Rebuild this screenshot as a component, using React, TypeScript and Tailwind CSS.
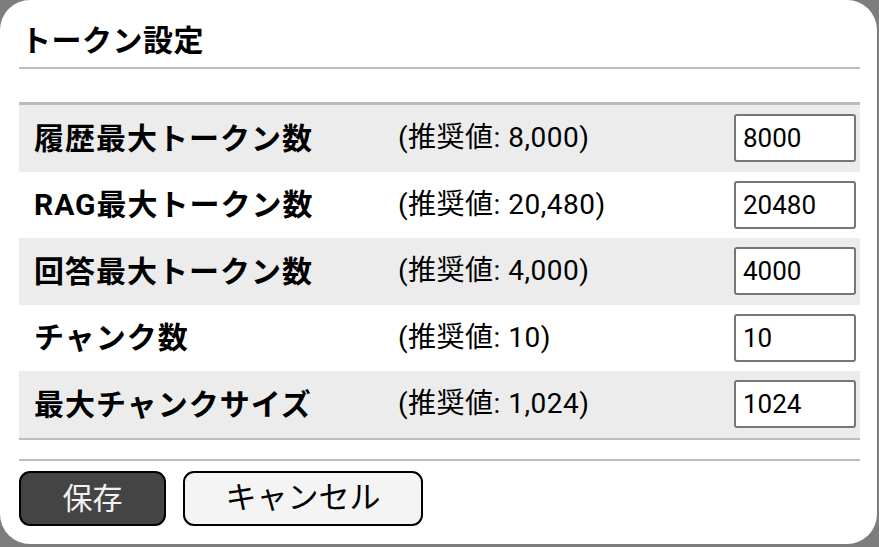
import { useState } from 'react';

const FONT = { fontFamily: 'Roboto, "Noto Sans CJK JP", sans-serif' };

interface TokenRow {
  key: string;
  label: string;
  hint: string;
  value: string;
}

const ROWS: TokenRow[] = [
  { key: 'history', label: '履歴最大トークン数', hint: '(推奨値: 8,000)', value: '8000' },
  { key: 'rag', label: 'RAG最大トークン数', hint: '(推奨値: 20,480)', value: '20480' },
  { key: 'answer', label: '回答最大トークン数', hint: '(推奨値: 4,000)', value: '4000' },
  { key: 'chunks', label: 'チャンク数', hint: '(推奨値: 10)', value: '10' },
  { key: 'chunkSize', label: '最大チャンクサイズ', hint: '(推奨値: 1,024)', value: '1024' },
];

export default function App() {
  const [values, setValues] = useState<Record<string, string>>(
    Object.fromEntries(ROWS.map((r) => [r.key, r.value]))
  );

  return (
    <div className="w-[879px] h-[547px] bg-[#7d7d7d] overflow-hidden" style={FONT}>
      <div className="w-[877px] h-[544px] bg-white rounded-[30px] pt-[22px] pl-[19px] pr-[17px] flex flex-col">
        {/* Header */}
        <h1 className="text-[30px] leading-[38px] font-bold text-black pl-[2px] pb-[7px] tracking-[0.5px] border-b-2 border-[#bdbdbd]">
          トークン設定
        </h1>

        {/* Settings table */}
        <div className="mt-[33px] border-t-[3px] border-b-2 border-[#bcbcbc]">
          {ROWS.map((row, i) => (
            <div
              key={row.key}
              className={`h-[66.5px] flex items-center ${i % 2 === 0 ? 'bg-[#ececec]' : 'bg-white'}`}
            >
              <span className="w-[379px] pl-[15px] text-[30px] tracking-[1px] font-bold text-black whitespace-nowrap">
                {row.label}
              </span>
              <span className="flex-1 text-[28px] tracking-[0.5px] text-black whitespace-nowrap">{row.hint}</span>
              <input
                value={values[row.key]}
                onChange={(e) => setValues((prev) => ({ ...prev, [row.key]: e.target.value }))}
                className="w-[122px] h-[48px] mr-[4px] px-[7px] bg-white border-2 border-[#767676] rounded-[3px] text-[26px] text-black outline-none"
                style={FONT}
              />
            </div>
          ))}
        </div>

        {/* Footer */}
        <div className="mt-[19px] border-t-2 border-[#bdbdbd] pt-[10px] flex gap-[17px]">
          <button className="w-[147px] h-[55px] bg-[#444444] border-2 border-black rounded-[11px] text-[30px] text-[#f2f2f2]">
            保存
          </button>
          <button className="w-[240px] h-[55px] bg-[#f4f4f4] border-2 border-black rounded-[11px] text-[31px] text-black">
            キャンセル
          </button>
        </div>
      </div>
    </div>
  );
}
